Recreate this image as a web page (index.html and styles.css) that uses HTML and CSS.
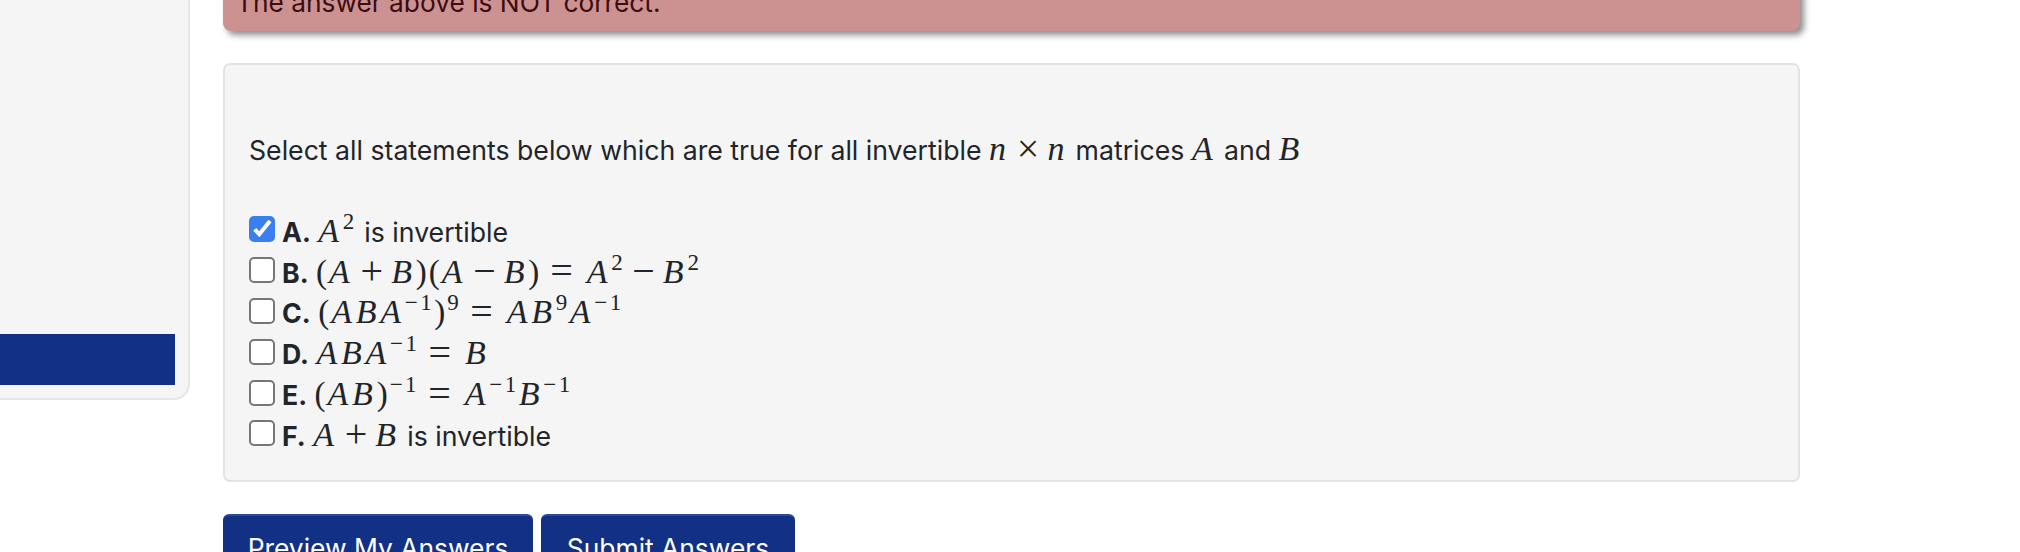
FILE: index.html
```html
<!DOCTYPE html>
<html lang="en">
<head>
<meta charset="utf-8">
<title>Problem</title>
<link rel="stylesheet" href="styles.css">
</head>
<body>
<div class="layout">
  <aside class="sidebar"><div class="side-bar-item"></div></aside>
  <main class="main">
    <div class="alert">The answer above is NOT correct.</div>
    <section class="problem">
      <p class="prompt">Select all statements below which are true for all invertible <span class="m"><i>n</i><span class="op">×</span><i>n</i></span> matrices <span class="m"><i>A</i></span> and <span class="m"><i>B</i></span></p>
      <div class="options">
        <label class="option"><span class="box checked"><svg viewBox="0 0 26 26" class="tick"><path d="M5.700 13.300l4.600 5 10.700-13.300"/></svg></span><span class="label"><b>A.</b> <span class="m"><i>A</i><sup>2</sup></span> is invertible</span></label>
        <label class="option"><span class="box"></span><span class="label"><b>B.</b> <span class="m">(<i>A</i><span class="op">+</span><i>B</i>)(<i>A</i><span class="op">−</span><i>B</i>)<span class="op rel">=</span><i>A</i><sup>2</sup><span class="op">−</span><i>B</i><sup>2</sup></span></span></label>
        <label class="option"><span class="box"></span><span class="label"><b>C.</b> <span class="m">(<i>ABA</i><sup>−1</sup>)<sup>9</sup><span class="op rel">=</span><i>AB</i><sup>9</sup><i>A</i><sup>−1</sup></span></span></label>
        <label class="option"><span class="box"></span><span class="label"><b>D.</b> <span class="m"><i>ABA</i><sup>−1</sup><span class="op rel">=</span><i>B</i></span></span></label>
        <label class="option"><span class="box"></span><span class="label"><b>E.</b> <span class="m">(<i>AB</i>)<sup>−1</sup><span class="op rel">=</span><i>A</i><sup>−1</sup><i>B</i><sup>−1</sup></span></span></label>
        <label class="option"><span class="box"></span><span class="label"><b>F.</b> <span class="m"><i>A</i><span class="op">+</span><i>B</i></span> is invertible</span></label>
      </div>
    </section>
    <div class="actions">
      <button class="btn btn-preview">Preview My Answers</button>
      <button class="btn btn-submit">Submit Answers</button>
    </div>
  </main>
</div>
</body>
</html>
```
FILE: styles.css
```css
* { box-sizing: border-box; }
html, body { margin: 0; height: 552px; overflow: hidden; background: #fff; }
body { font-family: Inter, "Liberation Sans", sans-serif; font-size: 26.67px; color: #212529; }
.layout { display: flex; gap: 33px; align-items: flex-start; }
.sidebar { width: 190px; height: 400px; flex: none; background: #f5f5f5; border: 2px solid #e6e6e6; border-width: 0 2px 2px 0; border-radius: 0 0 16px 0; padding: 0 13px 13px 0; display: flex; align-items: flex-end; }
.side-bar-item { width: 100%; height: 51px; background: #133184; }
.main { width: 1577px; flex: none; }
.alert { margin-top: -30px; height: 61px; font-size: 26.3px; line-height: 40px; padding: 0 13px 8px; background: #cc9292; color: #3d0b10; border-radius: 8px; box-shadow: 4px 4px 6px rgba(0,0,0,.45); display: flex; align-items: flex-end; }
.problem { margin-top: 32px; height: 419px; background: #f5f5f5; border: 2px solid #e3e3e3; border-radius: 7px; padding: 64px 24px 0; }
.prompt { margin: 0 0 41px; line-height: 40px; white-space: nowrap; }
.options { display: flex; flex-direction: column; }
.option { display: flex; align-items: center; height: 40.8px; }
.label { white-space: nowrap; }
.box { width: 26px; height: 26px; flex: none; border: 2px solid #767676; border-radius: 5px; background: #fff; margin: 0 7px 4px 0; display: block; }
.box.checked { background: #3b7ef0; border-color: #3b7ef0; }
.tick { display: block; width: 26px; height: 26px; margin: -2px; fill: none; stroke: #fff; stroke-width: 4; }
.option b { font-weight: 700; }
.m { font-family: "Liberation Serif", serif; font-size: 33px; letter-spacing: 2px; }
.m i { font-size: 34px; line-height: 0; font-style: italic; letter-spacing: .11em; }
.m sup { font-size: 23px; line-height: 0; vertical-align: 13px; letter-spacing: 2.5px; }
.op { font-size: 40px; line-height: 0; margin: 0 8px 0 7px; vertical-align: -1.5px; letter-spacing: 0; }
.op.rel { margin: 0 14px 0 9px; }
.actions { display: flex; gap: 8px; margin-top: 32px; }
.btn { flex: none; height: 60px; border: 0; border-top: 2px solid #2e4b98; border-radius: 6px; background: #133184; color: #fff; font-family: Inter, sans-serif; font-size: 26.4px; line-height: 40px; padding: 6px 0 0; white-space: nowrap; }
.btn-preview { width: 310px; }
.btn-submit { width: 254px; }
```
